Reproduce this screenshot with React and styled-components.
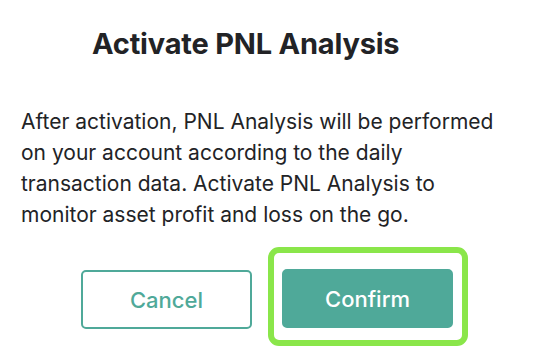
import React from "react";
import styled, { createGlobalStyle } from "styled-components";

const GlobalStyle = createGlobalStyle`
  html, body {
    margin: 0;
    padding: 0;
    background: #ffffff;
  }
  body {
    font-family: Inter, "Noto Sans", "Liberation Sans", sans-serif;
    -webkit-font-smoothing: antialiased;
  }
`;

const Dialog = styled.div`
  width: 536px;
  height: 354px;
  box-sizing: border-box;
  padding: 25px 21px 0 21px;
  background: #fff;
  display: flex;
  flex-direction: column;
`;

const Title = styled.h2`
  margin: 0 0 0 71px;
  font-size: 29px;
  line-height: 38px;
  font-weight: 700;
  color: #222326;
  letter-spacing: -0.2px;
`;

const Body = styled.p`
  margin: 43px 0 0 0;
  font-size: 21px;
  line-height: 31px;
  font-weight: 400;
  color: #222326;
`;

const Actions = styled.div`
  display: flex;
  align-items: flex-start;
  margin-top: 17px;
  padding-left: 60px;
  gap: 16px;
`;

const Button = styled.button`
  width: 171px;
  height: 59px;
  box-sizing: border-box;
  border-radius: 5px;
  font-family: inherit;
  font-size: 22px;
  font-weight: 500;
  cursor: pointer;
  border: 2px solid #4fa999;
  background: ${({ primary }) => (primary ? "#4fa999" : "#fff")};
  color: ${({ primary }) => (primary ? "#fff" : "#4fa999")};
`;

const CancelButton = styled(Button)`
  margin-top: 23px;
`;

const Highlight = styled.div`
  box-sizing: border-box;
  border: 6px solid #8ae64a;
  border-radius: 11px;
  padding: 16px 9px 12px 8px;
`;

export default function App() {
  return (
    <>
      <GlobalStyle />
      <Dialog>
        <Title>Activate PNL Analysis</Title>
        <Body>
          After activation, PNL Analysis will be performed on your account
          according to the daily transaction data. Activate PNL Analysis to
          monitor asset profit and loss on the go.
        </Body>
        <Actions>
          <CancelButton>Cancel</CancelButton>
          <Highlight>
            <Button primary>Confirm</Button>
          </Highlight>
        </Actions>
      </Dialog>
    </>
  );
}
